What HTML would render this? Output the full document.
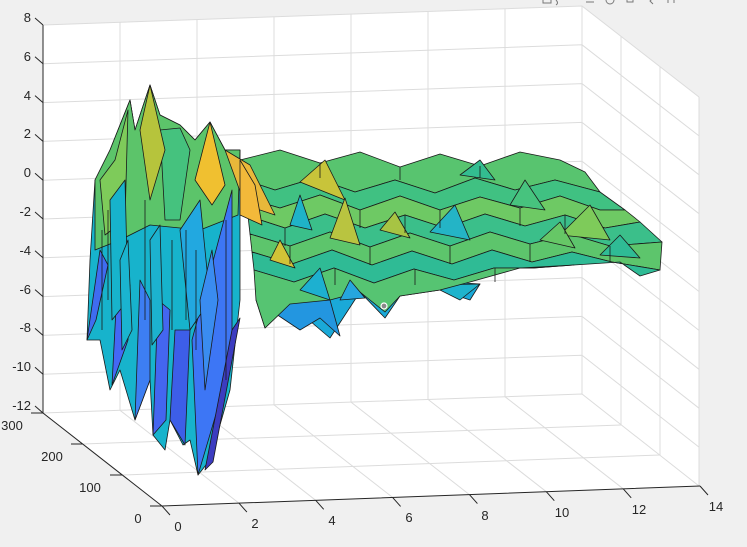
<!DOCTYPE html>
<html><head><meta charset="utf-8"><style>
html,body{margin:0;padding:0;background:#f0f0f0;width:747px;height:547px;overflow:hidden}
svg{display:block}
text{font-family:"Liberation Sans",sans-serif;font-size:13px;fill:#262626}
</style></head><body>
<svg width="747" height="547" viewBox="0 0 747 547" xmlns="http://www.w3.org/2000/svg">
<rect width="747" height="547" fill="#f0f0f0"/>
<g stroke="#777" fill="none" stroke-width="1">
<rect x="543" y="-4" width="8" height="7"/><path d="M556 0 q3 3 0 5"/><path d="M586 2 h8"/><circle cx="610" cy="0" r="4"/><rect x="627" y="-4" width="6" height="6"/><path d="M653 -2 l-3 3 l3 3"/><path d="M668 -2 v5 M674 -2 v5"/>
</g>
<polygon points="43,25 582,6 582,394 43,413" fill="#fff"/>
<polygon points="582,6 699,97 699,486 582,394" fill="#fff"/>
<polygon points="43,413 582,394 699,486 162,506" fill="#fff"/>
<g stroke="#dcdcdc" stroke-width="1" fill="none">
<path d="M43,25 L582,6 L699,97 M582,6 V394 M699,97 V486"/>
<path d="M120,22.3V410.3 M197,19.6V407.6 M274,16.9V404.9 M351,14.1V402.1 M428,11.4V399.4 M505,8.7V396.7"/>
<path d="M43,63.8L582,44.8L699,135.9 M43,102.6L582,83.6L699,174.8 M43,141.4L582,122.4L699,213.7 M43,180.2L582,161.2L699,252.6 M43,219L582,200L699,291.5 M43,257.8L582,238.8L699,330.4 M43,296.6L582,277.6L699,369.3 M43,335.4L582,316.4L699,408.2 M43,374.2L582,355.2L699,447.1"/>
<path d="M43,413L582,394L699,486"/>
<path d="M621,36.3V424.7 M660,66.7V455.3"/>
<path d="M120,410.3L238.9,503.1 M197,407.6L315.7,500.3 M274,404.9L392.6,497.4 M351,402.1L469.4,494.6 M428,399.4L546.3,491.7 M505,396.7L623.2,488.8"/>
<path d="M83,444L621,425 M122,475L660,455"/>
</g>
<!-- band -->
<g stroke="#1a1a1a" stroke-width="0.8" stroke-linejoin="round">
<polygon points="256,300 265,328 290,304 330,338 360,292 385,318 400,296 440,290 470,300 480,284 420,280 300,285" fill="#1aa9d8"/>
<polygon points="270,310 300,300 330,300 340,336 320,318 300,330" fill="#2396e0"/>
<polygon points="430,285 460,300 480,284" fill="#1fb4cc"/>
<polygon points="240,160 280,150 320,163 360,152 400,167 440,154 480,166 520,152 560,160 585,172 600,192 555,180 515,190 475,178 435,193 395,180 355,192 315,178 275,190 245,180" fill="#58c46f"/>
<polygon points="245,180 275,190 315,178 355,192 395,180 435,193 475,178 515,190 555,180 600,192 625,210 600,210 560,196 520,208 480,197 440,210 400,196 360,210 320,195 280,208 245,198" fill="#40c182"/>
<polygon points="245,198 280,208 320,195 360,210 400,196 440,210 480,197 520,208 560,196 600,210 625,210 640,222 605,228 565,215 525,226 485,214 445,228 405,215 365,228 325,214 285,228 248,216" fill="#6ec964"/>
<polygon points="248,216 285,228 325,214 365,228 405,215 445,228 485,214 525,226 565,215 605,228 640,222 662,242 610,246 570,234 530,244 490,232 450,246 410,233 370,247 330,232 290,246 250,234" fill="#3bbf8a"/>
<polygon points="250,234 290,246 330,232 370,247 410,233 450,246 490,232 530,244 570,234 610,246 662,242 660,270 612,262 572,252 532,262 492,250 452,264 412,251 372,265 332,250 292,264 252,252" fill="#5dc56c"/>
<polygon points="252,252 292,264 332,250 372,265 412,251 452,264 492,250 532,262 572,252 612,262 660,270 640,276 620,262 574,265 534,268 494,268 454,280 414,269 374,283 334,268 294,282 254,270" fill="#2fbb95"/>
<polygon points="254,270 294,282 334,268 374,283 414,269 454,280 494,268 534,268 574,265 520,268 470,282 440,290 400,296 385,312 360,292 330,300 290,304 265,328 256,300" fill="#56c472"/>
<polygon points="300,182 325,160 345,200" fill="#c8c43a"/>
<polygon points="330,238 345,198 360,245" fill="#b9c440"/>
<polygon points="290,225 300,195 312,230" fill="#1fb3c8"/>
<polygon points="430,232 455,205 470,240" fill="#24b4c6"/>
<polygon points="510,205 525,180 545,210" fill="#47c37e"/>
<polygon points="560,235 590,205 610,240" fill="#7ecb5a"/>
<polygon points="600,255 620,235 640,258" fill="#2fbb95"/>
<polygon points="380,230 395,212 410,238" fill="#a7c443"/>
<polygon points="460,175 480,160 495,180" fill="#33bd90"/>
<polygon points="300,290 320,268 330,300" fill="#1db0d0"/>
<polygon points="340,300 350,280 365,298" fill="#26a6de"/>
<polygon points="540,240 560,222 575,248" fill="#66c766"/>
<polygon points="270,260 280,240 295,268" fill="#d2c337"/>
<path d="M320,163V178 M400,167V180 M480,166V178 M360,210V228 M440,210V228 M520,208V226 M290,246V264 M370,247V265 M450,246V264 M530,244V262 M610,246V262 M335,268V285 M415,269V285 M495,268V282 M565,215V234 M405,215V233 M285,228V246" fill="none"/>
</g>
<!-- left block -->
<g stroke="#1a1a1a" stroke-width="0.8" stroke-linejoin="round">
<polygon points="95,180 110,150 130,100 135,130 150,85 160,115 180,125 195,140 210,122 225,150 240,150 240,300 230,390 210,460 198,475 190,440 183,445 170,420 165,450 153,435 150,380 135,420 120,370 110,390 100,340 87,340 90,260" fill="#17b3cc"/>
<polygon points="95,180 110,150 130,100 135,130 150,85 160,115 180,125 195,140 210,122 225,150 240,150 238,215 200,230 150,225 120,240 95,250" fill="#5cc46a"/>
<polygon points="100,180 115,160 128,110 125,220 105,235" fill="#7ecb5a"/>
<polygon points="160,130 180,128 190,150 180,220 165,220" fill="#45c27e"/>
<polygon points="140,130 150,85 165,150 150,200" fill="#b6c43c"/>
<polygon points="195,180 210,122 225,185 212,205" fill="#f0c030"/>
<polygon points="225,150 250,165 275,215 245,205" fill="#e8b83a"/>
<polygon points="240,160 255,185 262,225 240,215" fill="#f2b93a"/>
<polygon points="232,190 232,360 198,475 192,340" fill="#3d76f5"/>
<polygon points="232,330 205,470 213,462 240,318" fill="#3c3cc0"/>
<polygon points="87,340 100,250 108,265 96,320" fill="#3f6cf0"/>
<polygon points="112,385 118,270 130,285 128,340" fill="#4468f5"/>
<polygon points="135,420 140,280 150,300 150,380" fill="#3d7ef2"/>
<polygon points="153,435 158,300 170,310 166,420" fill="#4466f0"/>
<polygon points="170,420 175,330 190,330 185,445" fill="#3d5ee8"/>
<polygon points="110,200 125,180 128,300 112,320" fill="#17b3cc"/>
<polygon points="180,230 200,200 210,300 190,330" fill="#22a8e0"/>
<polygon points="120,260 128,240 132,330 122,350" fill="#1ab4d0"/>
<polygon points="150,240 160,225 163,330 152,345" fill="#1cb2cf"/>
<polygon points="200,300 212,250 218,300 205,390" fill="#3a8cf0"/>
<path d="M102,230V330 M108,210V300 M145,200V320 M172,240V330 M186,230V320 M196,250V350 M226,220V380" fill="none"/>
</g>
<circle cx="384" cy="306" r="3" fill="#888" stroke="#fff" stroke-width="1.2"/>
<g stroke="#262626" stroke-width="1" fill="none">
<path d="M43,25 L43,413 L162,506 L700,486"/>
<path d="M43,25l-8,-7 M43,63.8l-8,-7 M43,102.6l-8,-7 M43,141.4l-8,-7 M43,180.2l-8,-7 M43,219l-8,-7 M43,257.8l-8,-7 M43,296.6l-8,-7 M43,335.4l-8,-7 M43,374.2l-8,-7 M43,413l-8,-7"/>
<path d="M43,413h-12 M83,444h-12 M122,475h-12 M162,506h-12"/>
<path d="M162,506l8,9 M238.9,503.1l8,9 M315.7,500.3l8,9 M392.6,497.4l8,9 M469.4,494.6l8,9 M546.3,491.7l8,9 M623.2,488.8l8,9 M700,486l8,9"/>
</g>
<g text-anchor="end">
<text x="31" y="22">8</text><text x="31" y="61">6</text><text x="31" y="100">4</text><text x="31" y="138">2</text><text x="31" y="177">0</text><text x="31" y="216">-2</text><text x="31" y="255">-4</text><text x="31" y="294">-6</text><text x="31" y="332">-8</text><text x="31" y="371">-10</text><text x="31" y="410">-12</text>
</g>
<g text-anchor="middle">
<text x="12" y="430">300</text><text x="52" y="461">200</text><text x="90" y="492">100</text><text x="138" y="523">0</text>
<text x="178" y="531">0</text><text x="255" y="528">2</text><text x="332" y="525">4</text><text x="409" y="522">6</text><text x="485" y="520">8</text><text x="562" y="517">10</text><text x="639" y="514">12</text><text x="716" y="511">14</text>
</g>
</svg>
</body></html>
